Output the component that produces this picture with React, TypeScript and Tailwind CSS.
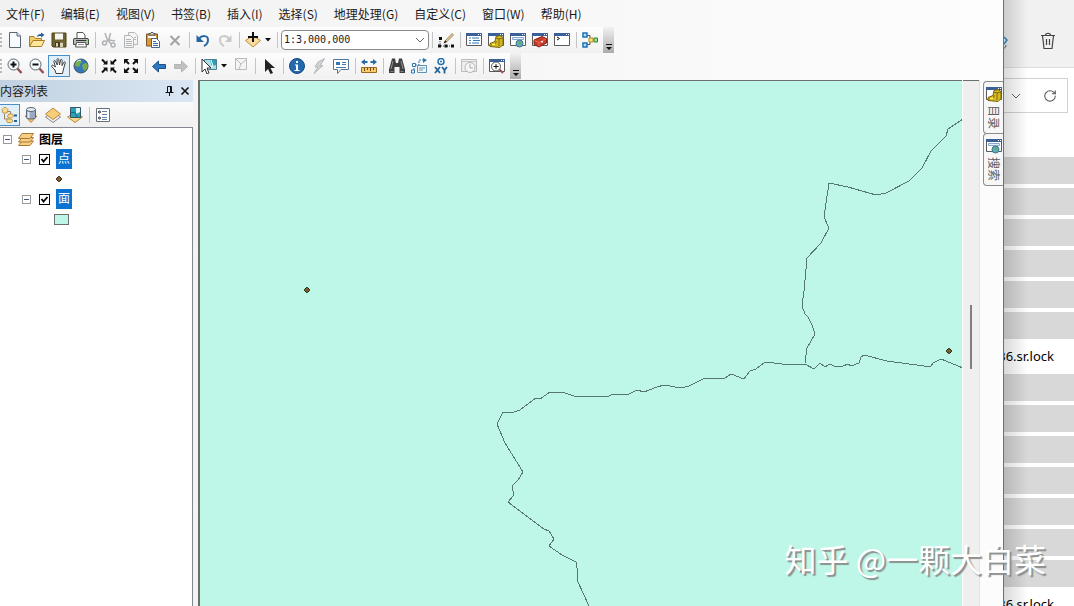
import type { ReactNode } from "react"
import { RotateCw } from "lucide-react"

const pageFrame = (
  <>
    <path d="M.5 1.5h15v12H.5z" fill="#fff" stroke="#5a5a5a" />
    <path d="M0 1h16v3H0z" fill="#3a6098" />
    <path d="M12 2h1v1h-1zM14 2h1v1h-1z" fill="#fff" />
  </>
)

const diamond = <path d="M8 5.500 15.500 10 8 15.500.500 10z" fill="#f8d58c" stroke="#b98a3e" />

const icons: Record<string, ReactNode> = {
  new: (
    <>
      <path d="M2.500.500h7.500l3.500 3.500v11.500h-11z" fill="#f7fbff" stroke="#5b6675" />
      <path d="M10 .500v3.500h3.500" fill="#dde6ef" stroke="#5b6675" />
    </>
  ),
  open: (
    <>
      <path d="M.500 14.500v-10h4.500l1.500 2h6v3" fill="#f3cf6b" stroke="#a87c27" />
      <path d="M.500 14.500 4 8.500h11.500l-3 6z" fill="#ffe69a" stroke="#a87c27" />
      <path d="M8 5c0-2 1.500-3 4-3V.500L15.500 3 12 5.500V4c-2 0-3 0-4 1z" fill="#285f9b" />
    </>
  ),
  save: (
    <>
      <path d="M1 1h14v14H2l-1-1z" fill="#6f6130" stroke="#4c431f" />
      <path d="M4 1.500h8v6H4z" fill="#f6f6ef" />
      <path d="M4 10h8v5H4z" fill="#403a27" />
      <path d="M5 11h2v3.500H5zM9 10.500h3V15H9z" fill="#d8d3b3" />
    </>
  ),
  print: (
    <>
      <path d="M4 6V.500h6L12 3v3" fill="#fff" stroke="#555" />
      <path d="M1 6.500h14l.500 1.500v4.500H.500V8z" fill="#b8babc" stroke="#4b4b4b" />
      <path d="M3 8.500h10" stroke="#333" />
      <path d="M3.500 10.500h9l1 4.500h-11z" fill="#fff" stroke="#555" />
      <path d="M5 12.500h6" stroke="#999" />
      <path d="M13 8h1v1h-1z" fill="#5dbb48" />
    </>
  ),
  cut: (
    <g fill="none" stroke="#aeb1b5" strokeWidth="1.500">
      <path d="M4 1l2 6 4 5M9.500 1 8 7l-3 3" />
      <circle cx="3.500" cy="11" r="2" />
      <circle cx="12" cy="13" r="2" />
      <path d="M8 8l6 1" />
    </g>
  ),
  copy: (
    <g stroke="#b3b6b9" fill="#f5f5f5">
      <path d="M5.500.500h6l3 3v9h-9z" />
      <path d="M1.500 3.500h6l3 3v9h-9z" />
      <path d="M3 7.500h5M3 9.500h6M3 11.500h6M3 13.500h6M11 5.500h2M11 7.500h2" />
    </g>
  ),
  paste: (
    <>
      <path d="M1.500 2h11v12h-11z" fill="#d99b3a" stroke="#795526" />
      <path d="M4 3V1.500h1.500l.500-1h2l.500 1H10V3z" fill="#ddd" stroke="#555" />
      <path d="M3 4h8v2H3z" fill="#fff" />
      <path d="M6.500 6.500h5l3 3v6h-8z" fill="#fff" stroke="#4a6188" />
      <path d="M8 9.500h3M8 11.500h5M8 13.500h5" stroke="#386ca6" />
    </>
  ),
  remove: <path d="M3.500 4l9 9M12.500 4l-9 9" fill="none" stroke="#9fa3a7" strokeWidth="2" />,
  undo: (
    <>
      <path d="M4 7c3-4 9-4 9 1 0 3-2 5-4 6" fill="none" stroke="#2668a5" strokeWidth="2" />
      <path d="M1.500 3v7H9z" fill="#2668a5" />
    </>
  ),
  redo: (
    <>
      <path d="M12 7C9 3 3 3 3 8c0 3 2 5 4 6" fill="none" stroke="#c7c9cb" strokeWidth="2" />
      <path d="M14.500 3v7H8z" fill="#c7c9cb" />
    </>
  ),
  addData: (
    <>
      <path d="M8 3.500 15.500 8.500 8 15 .500 8.500z" fill="#f9dc9e" stroke="#bd8b3c" />
      <path d="M7 0h2v4h4v2H9v4H7V6H3V4h4z" fill="#111" />
    </>
  ),
  editor: (
    <>
      <path d="M2 7v7h12" fill="none" stroke="#444" strokeDasharray="1 1" />
      <path d="M1 5h3v3H1zM0 12.500h3v3H0zM6.500 12.500h3v3h-3zM13 12.500h3v3h-3z" fill="#111" />
      <path d="M7 9l7-7.500L15.500 3l-7 7z" fill="#e8c88f" stroke="#8d744c" strokeWidth=".8" />
      <path d="M5.500 11.500 7 8.500 9 10z" fill="#111" />
    </>
  ),
  toc: (
    <>
      {pageFrame}
      <path d="M3 6h2M3 8.500h2M3 11h2M6 6h7M7 8.500h7M6 11h7" stroke="#3579bd" />
    </>
  ),
  catalog: (
    <>
      {pageFrame}
      <path d="M8 4.500l4-1 3 2v7l-3 3-10-1v-3l5-2z" fill="#d6b91f" stroke="#79630a" />
      <path d="M11 6v8M8 6l3 1 4-1M3 13l5-2v-2" fill="none" stroke="#806f12" />
      <path d="M4 12l3-1v2H4z" fill="#fff06e" />
    </>
  ),
  search: (
    <>
      {pageFrame}
      <path d="M2.500 5.500h11v2h-11z" fill="#e3effb" stroke="#89a8ce" />
      <circle cx="9.500" cy="11.500" r="3.500" fill="#63aeb2" stroke="#3a7294" />
      <path d="M8 10l2-1 2 2-2 2z" fill="#65ac69" />
    </>
  ),
  toolbox: (
    <>
      {pageFrame}
      <path d="M2 8 10 4.500l4.500 2v4.500L7 15l-5-2.500z" fill="#c93b2a" stroke="#872015" />
      <path d="M2.500 8.500l4.500 2 7-3.500M7 10.500V14" fill="none" stroke="#ec7a63" strokeWidth=".8" />
      <path d="M9 9h2v1.500H9z" fill="#eee" />
    </>
  ),
  python: (
    <>
      {pageFrame}
      <path d="M3 5l2.500 1.500L3 8" fill="none" stroke="#111" />
    </>
  ),
  model: (
    <>
      <path d="M5 3.500h3v4h3M5 12.500h3v-4" fill="none" stroke="#555" />
      <path d="M1 1h4v4H1zM1 11h4v4H1z" fill="#b6defa" stroke="#1b73b8" strokeWidth="1.500" />
      <path d="M7 6h4v4H7z" fill="#ffe37c" stroke="#b18a12" />
      <path d="M12 6h3.500v4H12z" fill="#a7dc9e" stroke="#30813a" />
    </>
  ),
  zoomIn: (
    <>
      <path d="M10 10l4.500 5" stroke="#945052" strokeWidth="2.500" />
      <circle cx="6.500" cy="6.500" r="5.500" fill="#f5fafc" stroke="#59656c" />
      <path d="M3.500 6.500h6M6.500 3.500v6" stroke="#111" strokeWidth="2" />
    </>
  ),
  zoomOut: (
    <>
      <path d="M10 10l4.500 5" stroke="#945052" strokeWidth="2.500" />
      <circle cx="6.500" cy="6.500" r="5.500" fill="#f5fafc" stroke="#59656c" />
      <path d="M3.500 6.500h6" stroke="#111" strokeWidth="2" />
    </>
  ),
  pan: (
    <path
      d="M5 15.500 4 12 .700 8.500c-.500-1 .800-1.800 1.600-1L4.500 9 2.800 3.500c-.300-1 1.200-1.500 1.600-.500L6.300 7 6 1.500c0-1.200 1.500-1.200 1.700 0L8.500 7l1-5c.200-1 1.700-.800 1.600.300L11 7.700l1.800-3.400c.500-1 1.800-.300 1.400.700L12.500 11l-1 4.500z"
      fill="#fff"
      stroke="#404040"
    />
  ),
  globe: (
    <>
      <circle cx="8" cy="8" r="7" fill="#3677b7" stroke="#3f5267" />
      <path d="M3 3.500l4-1.500 2 2-2 2v2l-3 1-2-2zM9 7l3-2 2.500 1v4L12 13l-2-2z" fill="#75ae4b" />
      <path d="M4 3.500c1.500-1.500 3-1.500 4-1" fill="none" stroke="#d7f1ff" />
    </>
  ),
  fixedIn: (
    <>
      <path d="M1 1.500l4 4M15 1.500l-4 4M1 14.500l4-4M15 14.500l-4-4" stroke="#111" strokeWidth="2" />
      <path d="M6.500 2v4.500H2zM9.500 2v4.500H14zM6.500 14V9.500H2zM9.500 14V9.500H14z" fill="#111" />
    </>
  ),
  fixedOut: (
    <>
      <path d="M2 2l4 4M14 2l-4 4M2 14l4-4M14 14l-4-4" stroke="#111" strokeWidth="2" />
      <path d="M1 1h5L1 6zM15 1h-5l5 5zM1 15h5l-5-5zM15 15h-5l5-5z" fill="#111" />
    </>
  ),
  back: <path d="M1.500 8.500 7.500 3v3.500h7v4h-7V14z" fill="#2f79c3" stroke="#1d508c" />,
  forward: <path d="M14.500 8.500 8.500 3v3.500h-7v4h7V14z" fill="#bfc0c1" stroke="#b2b4b6" />,
  select: (
    <>
      <path d="M3.500 1.500h12v10h-12z" fill="#a9e0e8" stroke="#4e7c91" />
      <path d="M9 2h6v5l-4 1z" fill="#299fb6" />
      <path d="M10 2l2 6-5 3" fill="none" stroke="#fff" />
      <path d="M1 1v13l3-3 2 5 2-1-2-5h4z" fill="#fff" stroke="#333" />
    </>
  ),
  clear: (
    <>
      <path d="M2.500.500h11v11h-11z" fill="#f4f4f4" stroke="#bbb" />
      <path d="M3 1l5 5 5-4M8 6l-2 5" fill="none" stroke="#bbb" />
    </>
  ),
  pointer: <path d="M4 1v13l3-3 2.500 5 2.500-1-2.500-5H14z" fill="#222" />,
  identify: (
    <>
      <circle cx="8" cy="8" r="7.500" fill="#2468ae" stroke="#174883" />
      <path d="M7 3h2v2H7zM6 6.500h3V12h1.500v1h-5v-1H7V7.500H6z" fill="#fff" />
    </>
  ),
  hyperlink: <path d="M13.500.500 7 4 4 9l3-.500L3 15.500 12 7.500l-3 .500z" fill="#d2d3d5" stroke="#b4b6b9" />,
  popup: (
    <>
      <path d="M.500 1.500h15v10H8l-3.500 4v-4h-4z" fill="#fff" stroke="#54779b" />
      <path d="M3 4h4v3H3z" fill="#3576ad" />
      <path d="M9 4.500h4M9 6.500h4M3 9.500h10" stroke="#477caa" />
    </>
  ),
  measure: (
    <>
      <path d="M3 4h3.500M9.500 4H13" stroke="#286bab" strokeWidth="2" />
      <path d="M0 4l4-3v6zM16 4l-4-3v6z" fill="#286bab" />
      <path d="M.500 9.500h15v5H.500z" fill="#f7cb6c" stroke="#9a6a27" />
      <path d="M3.500 10v3M6.500 10v2M9.500 10v3M12.500 10v2" stroke="#704a18" />
    </>
  ),
  find: (
    <>
      <path d="M3 .500h3L7 5h2l1-4.500h3l3 11V15h-5.500V9h-5v6H0v-3.500z" fill="#3e4040" />
      <path d="M4 3 2 11M12 3l2 8" stroke="#909492" />
      <path d="M1.500 13.500h3M11.500 13.500h3" stroke="#858985" />
    </>
  ),
  route: (
    <>
      <path d="M3 12V7h5V2h5" fill="none" stroke="#2b75ae" strokeDasharray="2 1" />
      <path d="M12 0l4 2-4 3z" fill="#2b75ae" />
      <path d="M1.500 5.500h3v3h-3zM.500 12h3v3h-3z" fill="#fff" stroke="#2b75ae" />
      <path d="M6.500 7.500h9v7h-9z" fill="#eff7fb" stroke="#5e91b2" />
      <path d="M8 10h6M8 12h4" stroke="#6796b3" />
    </>
  ),
  xy: (
    <>
      <circle cx="8" cy="3.500" r="3" fill="#fff" stroke="#2471ac" strokeWidth="1.500" />
      <circle cx="8" cy="3.500" r="1" fill="#2471ac" />
      <path d="M2 9l5 6M7 9l-5 6M9 9l2.500 3L14 9M11.500 12v3.500" fill="none" stroke="#20649b" strokeWidth="1.800" />
    </>
  ),
  time: (
    <>
      <path d="M.500 1.500h15v12H.500z" fill="#eee" stroke="#bcbcbc" />
      <path d="M1 3.500h14" stroke="#c7c7c7" />
      <circle cx="9" cy="9.500" r="5" fill="#f6f6f6" stroke="#b5b5b5" />
      <path d="M9 6v4h3" fill="none" stroke="#aaa" />
    </>
  ),
  viewer: (
    <>
      {pageFrame}
      <path d="M10 11l4 4" stroke="#9c504c" strokeWidth="2" />
      <circle cx="7" cy="8.500" r="4.500" fill="#fff" stroke="#555" />
      <path d="M4.500 8.500h5M7 6v5" stroke="#111" />
    </>
  ),
  drawingOrder: (
    <>
      <path d="M3.500 7v5h4M6 4.500h3.500v3" fill="none" stroke="#9b8256" />
      <path d="M1 2.500l2-2h2l2 2-1 3.500H2zM7.500 7h4l1 2-2 2h-2l-2-1zM6.500 12h4l1.500 2-1.500 1.500h-4L5.500 14z" fill="#f8dc91" stroke="#c59549" />
      <path d="M13 8.500h3M13 14h3" stroke="#1f6199" strokeWidth="2" />
    </>
  ),
  source: (
    <>
      <path d="M2 9h12l-6 6.500z" fill="#efc466" stroke="#b9893f" />
      <path d="M3.500 2.500v8c0 2 9 2 9 0v-8" fill="#9baac2" stroke="#596779" />
      <ellipse cx="8" cy="2.500" rx="4.500" ry="2" fill="#e7edf4" stroke="#596779" />
      <path d="M5.500 5v6" stroke="#e3ebf5" strokeWidth="2" />
    </>
  ),
  visibility: (
    <>
      <path d="M.500 10 8 5l7.500 5L8 15.500z" fill="#eee" stroke="#888" />
      <path d="M.500 7 8 1l7.500 6L8 12.500z" fill="#f7cd78" stroke="#b98a3e" />
    </>
  ),
  selection: (
    <>
      {diamond}
      <path d="M3.500.500h10v10h-10z" fill="#25a3b7" stroke="#35566a" />
      <path d="M9 1h4v4L9 7z" fill="#dff7fa" />
      <path d="M4 6l4-1 2 5" fill="none" stroke="#176a80" />
    </>
  ),
  options: (
    <>
      <path d="M1.500 1.500h13v13h-13z" fill="#fff" stroke="#66717d" />
      <circle cx="4.500" cy="5" r="1" fill="none" stroke="#222" />
      <circle cx="4.500" cy="11" r="1" fill="none" stroke="#222" />
      <path d="M7 4.500h5M7 7.500h5M7 10.500h5M7 12.500h5" stroke="#6582a4" />
    </>
  ),
  layers: (
    <g fill="#f4cf82" stroke="#ad7834">
      <path d="M.500 14.500 4 10h11.500L12 14.500z" />
      <path d="M.500 11 4 6.500h11.500L12 11z" />
      <path d="M.500 7.500 4 2.500h11.500L12 7.500z" />
    </g>
  ),
}

function Icon({ name }: { name: string }) {
  return (
    <svg viewBox="0 0 16 16" className="w-4 h-4 flex-shrink-0" aria-hidden="true">
      {icons[name]}
    </svg>
  )
}

interface Tool {
  icon?: string
  label?: string
  active?: boolean
  menu?: boolean
}

const sep: Tool = {}

const standardTools: Tool[] = [
  { icon: "new", label: "新建" },
  { icon: "open", label: "打开" },
  { icon: "save", label: "保存" },
  { icon: "print", label: "打印" },
  sep,
  { icon: "cut", label: "剪切" },
  { icon: "copy", label: "复制" },
  { icon: "paste", label: "粘贴" },
  { icon: "remove", label: "删除" },
  sep,
  { icon: "undo", label: "撤消" },
  { icon: "redo", label: "恢复" },
  sep,
  { icon: "addData", label: "添加数据", menu: true },
  sep,
]

const windowTools: Tool[] = [
  sep,
  { icon: "editor", label: "编辑器工具条" },
  sep,
  { icon: "toc", label: "内容列表" },
  { icon: "catalog", label: "目录窗口" },
  { icon: "search", label: "搜索窗口" },
  { icon: "toolbox", label: "工具箱" },
  { icon: "python", label: "Python 窗口" },
  sep,
  { icon: "model", label: "模型构建器" },
]

const mapTools: Tool[] = [
  { icon: "zoomIn", label: "放大" },
  { icon: "zoomOut", label: "缩小" },
  { icon: "pan", label: "平移", active: true },
  { icon: "globe", label: "全图" },
  sep,
  { icon: "fixedIn", label: "固定比例放大" },
  { icon: "fixedOut", label: "固定比例缩小" },
  sep,
  { icon: "back", label: "返回上一视图" },
  { icon: "forward", label: "转至下一视图" },
  sep,
  { icon: "select", label: "选择要素", menu: true },
  { icon: "clear", label: "清除所选要素" },
  sep,
  { icon: "pointer", label: "选择元素" },
  sep,
  { icon: "identify", label: "识别" },
  { icon: "hyperlink", label: "超链接" },
  { icon: "popup", label: "HTML 弹出窗口" },
  sep,
  { icon: "measure", label: "测量" },
  sep,
  { icon: "find", label: "查找" },
  { icon: "route", label: "查找路径" },
  { icon: "xy", label: "转到 XY" },
  sep,
  { icon: "time", label: "时间滑块" },
  sep,
  { icon: "viewer", label: "创建查看器窗口" },
]

const tocTools: Tool[] = [
  { icon: "drawingOrder", label: "按绘制顺序列出", active: true },
  { icon: "source", label: "按源列出" },
  { icon: "visibility", label: "按可见性列出" },
  { icon: "selection", label: "按选择列出" },
  sep,
  { icon: "options", label: "选项" },
]

function ToolItems({ tools }: { tools: Tool[] }) {
  return (
    <>
      {tools.map((tool, i) =>
        tool.icon ? (
          <button
            key={i}
            type="button"
            aria-label={tool.label}
            className={
              tool.active
                ? "h-[22px] min-w-[22px] flex items-center justify-center flex-shrink-0 bg-[#e1effa] border border-[#4a90c8]"
                : "h-[22px] min-w-[22px] flex items-center justify-center flex-shrink-0"
            }
          >
            <span className={tool.menu ? "pl-[3px]" : ""}>
              <Icon name={tool.icon} />
            </span>
            {tool.menu && (
              <svg viewBox="0 0 13 6" className="w-[13px] h-1.5" aria-hidden="true">
                <path d="M4 1h6L7 4.500z" fill="#111" />
              </svg>
            )}
          </button>
        ) : (
          <span key={i} className="w-1.5 flex justify-center flex-shrink-0">
            <span className="w-px h-4 bg-[#c4c4c4]" />
          </span>
        )
      )}
    </>
  )
}

function ToolStrip({ children }: { children: ReactNode }) {
  return (
    <div className="flex">
      <div className="h-[26px] flex items-center bg-gradient-to-b from-[#fdfdfd] to-[#f1f1f1]">
        <svg viewBox="0 0 2 16" className="w-0.5 h-4 mr-0.5" aria-hidden="true">
          <path d="M0 2h2M0 6h2M0 10h2M0 14h2" stroke="#b8b8b8" strokeWidth="2" />
        </svg>
        {children}
        <button
          type="button"
          aria-label="工具条选项"
          className="w-[11px] h-full ml-0.5 flex items-end justify-center pb-0.5 bg-gradient-to-b from-[#f2f2f2] to-[#acacac]"
        >
          <svg viewBox="0 0 6 7" className="w-1.5 h-[7px]" aria-hidden="true">
            <path d="M0 0h6v1H0zM0 3h6L3 6z" fill="#111" />
          </svg>
        </button>
      </div>
    </div>
  )
}

const menus = ["文件(F)", "编辑(E)", "视图(V)", "书签(B)", "插入(I)", "选择(S)", "地理处理(G)", "自定义(C)", "窗口(W)", "帮助(H)"]

function Expander({ label }: { label: string }) {
  return (
    <button type="button" aria-label={label} className="w-[9px] h-[9px] flex items-center justify-center border border-[#9a9a9a] bg-white">
      <span className="w-[5px] h-px bg-[#44587d]" />
    </button>
  )
}

function LayerRow({ name }: { name: string }) {
  return (
    <div className="h-5 flex items-center pl-[22px]">
      <Expander label={`折叠 ${name}`} />
      <label className="flex items-center gap-1.5 ml-2">
        <span className="grid">
          <input
            type="checkbox"
            defaultChecked
            className="peer appearance-none w-[11px] h-[11px] border border-black bg-white col-start-1 row-start-1"
          />
          <svg viewBox="0 0 11 11" className="w-[11px] h-[11px] col-start-1 row-start-1 pointer-events-none invisible peer-checked:visible" aria-hidden="true">
            <path d="M2.500 5l2 2.500 4-4.500" fill="none" stroke="#000" strokeWidth="1.800" />
          </svg>
        </span>
        <span className="w-4 h-5 text-center leading-[18px] bg-[#0a73cf] text-white">{name}</span>
      </label>
    </div>
  )
}

function ContentsPanel() {
  return (
    <section className="w-[193px] flex flex-col flex-shrink-0">
      <header className="h-[22px] flex items-center bg-gradient-to-r from-[#c2d2e0] to-[#dae6f3]">
        <h2 className="flex-1 leading-5">内容列表</h2>
        <button type="button" aria-label="自动隐藏" className="w-4 h-4 flex items-center justify-center">
          <svg viewBox="0 0 10 10" className="w-2.5 h-2.5" aria-hidden="true">
            <path d="M3.500 6V.500h4V6M1.500 6.500h8M5.500 7v3" fill="none" stroke="#111" />
            <path d="M6 1h1v5H6z" fill="#111" />
          </svg>
        </button>
        <button type="button" aria-label="关闭" className="w-4 h-4 flex items-center justify-center">
          <svg viewBox="0 0 10 10" className="w-2.5 h-2.5" aria-hidden="true">
            <path d="M1.500 1.500l7 7M8.500 1.500l-7 7" stroke="#111" strokeWidth="1.600" />
          </svg>
        </button>
      </header>
      <div className="h-[25px] flex items-center -ml-0.5 bg-gradient-to-b from-[#fbfbfb] to-[#efefef]">
        <ToolItems tools={tocTools} />
      </div>
      <div className="flex-1 bg-white border-t border-r border-[#828790] pt-px">
        <div className="h-5 flex items-center pl-[3px]">
          <Expander label="折叠 图层" />
          <span className="ml-1.5">
            <Icon name="layers" />
          </span>
          <span className="ml-[5px] font-bold text-black">图层</span>
        </div>
        <LayerRow name="点" />
        <div className="h-5 flex items-center pl-14">
          <svg viewBox="0 0 6 6" className="w-1.5 h-1.5" aria-hidden="true">
            <path d="M2.500.500h1l2 2v1l-2 2h-1l-2-2v-1z" fill="#8a5c2c" stroke="#1d1208" />
          </svg>
        </div>
        <LayerRow name="面" />
        <div className="h-5 flex items-center pl-[54px]">
          <span className="w-[15px] h-[11px] bg-[#bef6e7] border border-[#6e6e6e]" />
        </div>
      </div>
    </section>
  )
}

const riverPath =
  "M589 606 578 582 577 568 576 562 562 555 549 546 554 539 549 531 544 529 508 502 514 495 512 486 518 480 523 472 505 443 497 424 503 412 511 413 520 410 536 398 540 399 550 392 562 392 574 396 600 396 606 397 614 394 627 395 637 390 644 392 657 387 664 385 681 388 689 386 703 379 725 378 731 374 744 379 750 371 756 369 765 362 782 364 805 364 814 369 820 363 825 367 830 364 834 366 843 366 848 364 851 366 859 363 861 357 864 355 887 361 924 366 931 366 933 363 941 359 963 368"

const borderPath =
  "M805 363 807 348 815 334 812 325 808 317 805 314 802 306 804 291 807 258 821 243 829 228 824 217 829 183 848 187 876 195 886 193 909 181 922 168 931 151 946 136 948 129 963 119"

const points = [
  [307, 290],
  [949, 351],
]

function MapView() {
  return (
    <div className="flex-1 min-w-0 relative overflow-hidden bg-[#bef6e7] border-t border-l-2 border-[#6b706f]">
      <svg viewBox="200 81 762 525" preserveAspectRatio="xMinYMin slice" className="absolute inset-0 w-full h-full" role="img" aria-label="地图">
        <g fill="none" stroke="#56776f" shapeRendering="crispEdges">
          <path d={riverPath} />
          <path d={borderPath} />
        </g>
        {points.map(([x, y]) => (
          <path
            key={x}
            d={`M${x - 0.5} ${y - 2.5}h1l2 2v1l-2 2h-1l-2-2v-1z`}
            fill="#75602b"
            stroke="#1c1a0c"
          />
        ))}
      </svg>
    </div>
  )
}

function SideTab({ icon, label }: { icon: string; label: string }) {
  return (
    <button
      type="button"
      className="h-[53px] w-5 flex flex-col items-center gap-[3px] pt-1 -mb-px rounded-l border border-r-0 border-[#8c8c8c] bg-[#f7f7f7] text-[#606060]"
    >
      <Icon name={icon} />
      <span className="leading-4 [writing-mode:vertical-rl] [text-orientation:sideways]">{label}</span>
    </button>
  )
}

function MapWindow() {
  return (
    <div className="flex-1 min-w-0 flex flex-col bg-gradient-to-r from-[#f1f1f1] to-[#fdfdfd] border-r border-[#707070]">
      <nav className="h-[27px] flex items-center gap-4 pl-1.5 whitespace-nowrap">
        {menus.map((menu) => (
          <button key={menu} type="button">
            {menu}
          </button>
        ))}
      </nav>
      <ToolStrip>
        <ToolItems tools={standardTools} />
        <div className="grid items-center ml-px">
          <select
            aria-label="地图比例"
            className="col-start-1 row-start-1 appearance-none w-[148px] h-5 pl-0.5 border border-[#8a8a8a] rounded-sm bg-white font-['DejaVu_Sans_Mono',monospace] text-[10px]"
          >
            <option>1:3,000,000</option>
          </select>
          <svg viewBox="0 0 10 6" className="col-start-1 row-start-1 justify-self-end mr-1 w-2.5 h-1.5 pointer-events-none" aria-hidden="true">
            <path d="M1 1l4 4 4-4" fill="none" stroke="#666" />
          </svg>
        </div>
        <ToolItems tools={windowTools} />
      </ToolStrip>
      <ToolStrip>
        <ToolItems tools={mapTools} />
      </ToolStrip>
      <div className="flex-1 min-h-0 flex pt-px">
        <ContentsPanel />
        <main className="flex-1 min-w-0 flex ml-[5px]">
          <MapView />
          <div className="w-4 flex flex-col items-center ml-px border-t border-[#6b706f] bg-[#efefef]">
            <div className="w-0.5 h-16 mt-56 bg-[#808080]" />
          </div>
        </main>
        <aside className="w-6 flex flex-col items-end pt-px border-l border-[#e2e2e2] bg-[#fcfcfc]">
          <SideTab icon="catalog" label="目录" />
          <SideTab icon="search" label="搜索" />
        </aside>
      </div>
    </div>
  )
}

// an empty string is a row whose name has been masked
const fileRows = ["", "", "", "", "", "", "36.sr.lock", "", "", "", "", "", "", "", "36.sr.lock"]

function ExplorerWindow() {
  return (
    <div className="w-[70px] flex-shrink-0 relative overflow-hidden bg-white">
      <div className="h-[68px] flex items-center bg-[#f1f1f1] border-b border-[#dedede] pt-3.5">
        <svg viewBox="0 0 6 16" className="w-1.5 h-4" aria-hidden="true">
          <path d="M0 4l3 3-3 4" fill="none" stroke="#2f8ac9" strokeWidth="1.500" />
          <path d="M2 12c0 2-1 3-2 3" fill="none" stroke="#555" />
        </svg>
        <button type="button" aria-label="删除文件" className="ml-[29px]">
          <svg viewBox="0 0 18 18" className="w-[18px] h-[18px]" aria-hidden="true">
            <path
              d="M2 3.500h14M6.500 3.500c0-3 5-3 5 0M3.500 3.500l1.500 13h8l1.500-13M7.500 7v6M10.500 7v6"
              fill="none"
              stroke="#444"
              strokeWidth="1.200"
            />
          </svg>
        </button>
      </div>
      <div className="h-[35px] mt-2.5 mr-1.5 flex items-center border border-l-0 border-[#d2d2d2] text-[#555]">
        <button type="button" aria-label="历史记录" className="ml-[7px]">
          <svg viewBox="0 0 10 6" className="w-2.5 h-1.5" aria-hidden="true">
            <path d="M1 1l4 4 4-4" fill="none" stroke="#666" />
          </svg>
        </button>
        <button type="button" aria-label="刷新" className="ml-[22px]">
          <RotateCw size={14} strokeWidth={1.8} />
        </button>
      </div>
      <ul className="mt-11 flex flex-col gap-1">
        {fileRows.map((name, i) => (
          <li
            key={i}
            className={
              name
                ? "h-[27px] flex items-center justify-end pr-5 font-['Noto_Sans',sans-serif] text-[13px] text-black"
                : "h-[27px] bg-[#d8d8d8]"
            }
          >
            {name}
          </li>
        ))}
      </ul>
      <div className="absolute inset-y-0 left-0 w-6 bg-gradient-to-r from-black/15 to-transparent pointer-events-none" />
    </div>
  )
}

export default function App() {
  return (
    <div className="h-screen flex relative overflow-hidden font-['Noto_Sans_CJK_SC',sans-serif] text-xs text-[#1a1a1a]">
      <MapWindow />
      <ExplorerWindow />
      <p className="absolute right-7 bottom-6 text-[32px] leading-[48px] font-normal text-white whitespace-nowrap pointer-events-none [text-shadow:2px_2px_1px_#8a8f8e]">
        知乎 @一颗大白菜
      </p>
    </div>
  )
}
